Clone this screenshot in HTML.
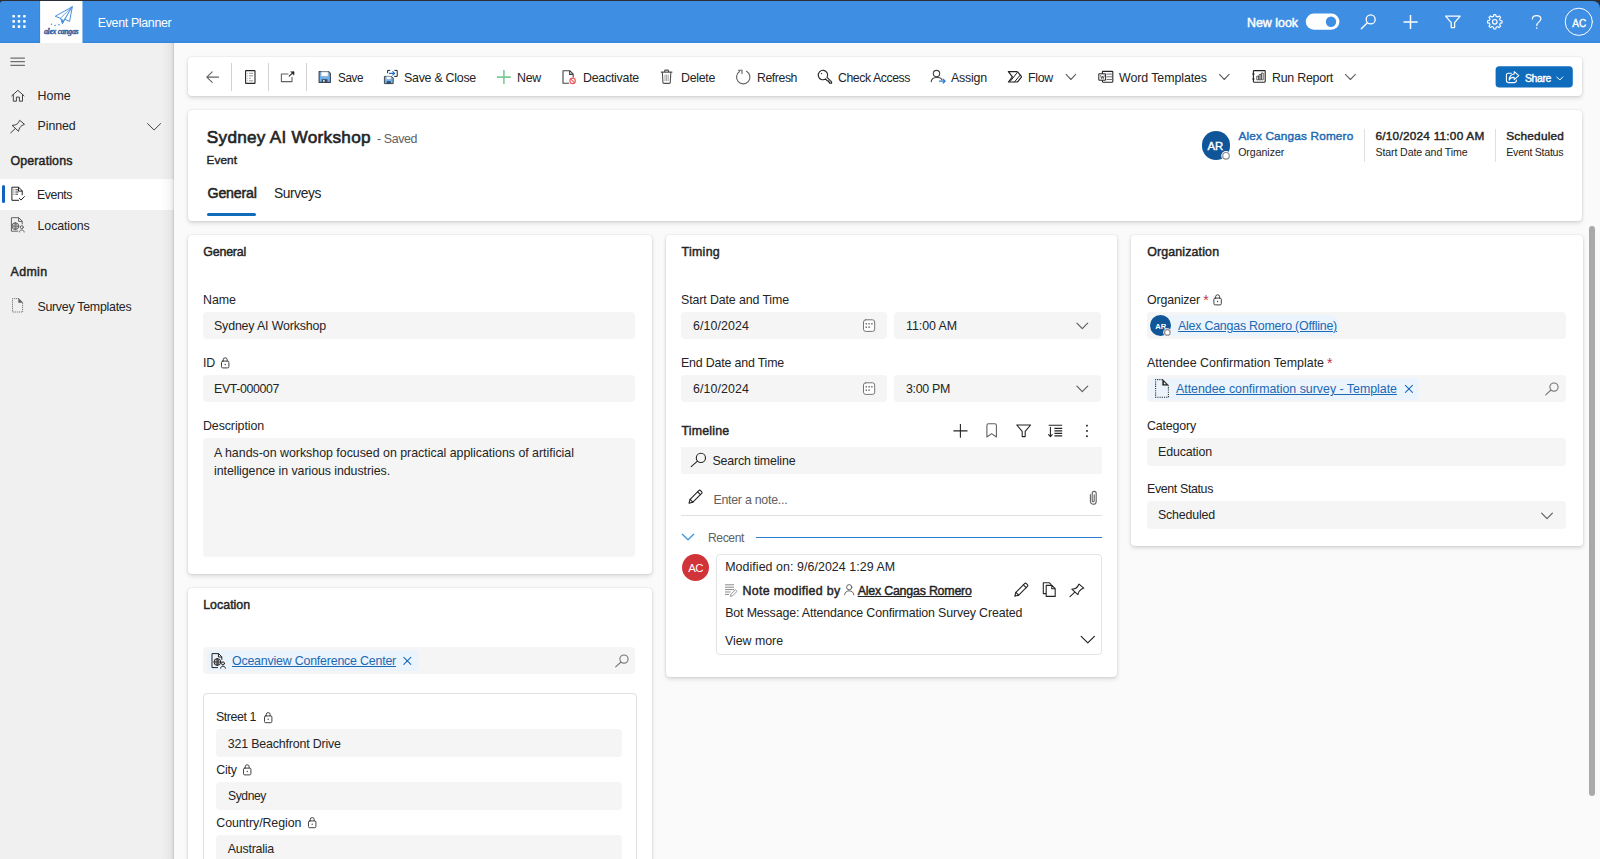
<!DOCTYPE html>
<html lang="en">
<head>
<meta charset="utf-8">
<title>Event: Sydney AI Workshop - Event Planner</title>
<style>
*{box-sizing:border-box;margin:0;padding:0}
html,body{width:1600px;height:859px;overflow:hidden;background:#fafafa;font-family:"Liberation Sans",sans-serif;color:#242424}
.abs,.t,.b,svg.i{position:absolute}
.t{white-space:nowrap;line-height:1;display:block}
.card{position:absolute;background:#fff;border-radius:4px;box-shadow:0 0 2px rgba(0,0,0,.12),0 2px 4px rgba(0,0,0,.14)}
.in{position:absolute;background:#f5f5f5;border-radius:4px}
.sep{position:absolute;width:1px;background:#d1d1d1}
svg.i{overflow:visible;fill:none;stroke:#424242;stroke-width:1;stroke-linecap:round;stroke-linejoin:round}
#top{left:0;top:1px;width:1600px;height:42px;background:#3e8ee3;border-radius:3px 7px 0 0}
#nav{left:0;top:43px;width:174px;height:816px;background:#f0f0f0}
#navsh{left:160px;top:43px;width:14px;height:816px;background:linear-gradient(90deg,rgba(0,0,0,0) 0%,rgba(0,0,0,.015) 40%,rgba(0,0,0,.045) 75%,rgba(0,0,0,.09) 92%,rgba(0,0,0,.2) 100%)}
</style>
</head>
<body>
<!-- top bar -->
<div class="abs" style="left:0;top:0;width:1600px;height:12px;background:#2a2f36"></div>
<div class="abs" id="top"></div>
<div class="abs" style="left:0;top:41px;width:1600px;height:2px;background:#3789e0"></div>
<div class="abs" style="left:174px;top:43px;width:1426px;height:1px;background:#fdfdfd"></div>
<svg class="abs" style="left:39px;top:0" width="46" height="44" viewBox="39 0 46 44"><rect x="39.4" y="1" width="43.8" height="42" fill="#3285de"/><rect x="40.1" y="1" width="42.4" height="42" fill="#fff"/></svg>
<!-- nav -->
<div class="abs" id="nav"></div>
<div class="abs" style="left:0;top:179px;width:174px;height:30.6px;background:#fff"></div>
<div class="abs" id="navsh"></div>
<div class="abs" style="left:1.7px;top:185px;width:3.2px;height:18px;border-radius:1.6px;background:#0f62c0"></div>
<!-- command bar -->
<div class="card" style="left:188px;top:57px;width:1394px;height:39px"></div>
<div class="sep" style="left:231px;top:63px;height:28px"></div>
<div class="sep" style="left:268px;top:63px;height:28px"></div>
<div class="sep" style="left:306px;top:63px;height:28px"></div>
<svg class="abs" style="left:1494px;top:65px" width="81" height="25" viewBox="1494 65 81 25"><rect x="1495.6" y="66.3" width="77.2" height="21.2" rx="3.8" fill="#0f6cbd"/></svg>
<!-- header card -->
<div class="card" style="left:188px;top:110px;width:1394px;height:111px"></div>
<div class="abs" style="left:207.2px;top:213px;width:48.8px;height:2.8px;border-radius:2px;background:#0f6cbd"></div>
<div class="abs" style="left:1201.6px;top:131.4px;width:28.2px;height:28.2px;border-radius:50%;background:#0f5598"></div>
<div class="sep" style="left:1364px;top:129px;height:33px;background:#e0e0e0"></div>
<div class="sep" style="left:1495px;top:129px;height:33px;background:#e0e0e0"></div>
<!-- General card -->
<div class="card" style="left:188px;top:235px;width:464px;height:338.5px"></div>
<div class="in" style="left:203px;top:311.6px;width:432px;height:27.4px"></div>
<div class="in" style="left:203px;top:375px;width:432px;height:27px"></div>
<div class="in" style="left:203px;top:438px;width:432px;height:119px"></div>
<!-- Location card -->
<div class="card" style="left:188px;top:587.5px;width:464px;height:300px"></div>
<div class="in" style="left:203px;top:647px;width:432px;height:27px"></div>
<div class="abs" style="left:206.6px;top:650.4px;width:211.7px;height:20.8px;border-radius:4px;background:#ebf3fc"></div>
<div class="abs" style="left:203px;top:693px;width:434px;height:200px;border:1px solid #e0e0e0;border-radius:4px;background:#fff"></div>
<div class="in" style="left:216px;top:729.4px;width:406px;height:27.6px"></div>
<div class="in" style="left:216px;top:782px;width:406px;height:27.6px"></div>
<div class="in" style="left:216px;top:834.8px;width:406px;height:27.6px"></div>
<!-- Timing card -->
<div class="card" style="left:666px;top:235px;width:451px;height:442px"></div>
<div class="in" style="left:681px;top:311.6px;width:206px;height:27.4px"></div>
<div class="in" style="left:894px;top:311.6px;width:207px;height:27.4px"></div>
<div class="in" style="left:681px;top:375px;width:206px;height:27px"></div>
<div class="in" style="left:894px;top:375px;width:207px;height:27px"></div>
<div class="abs" style="left:681px;top:447px;width:421px;height:27px;background:#f5f5f5"></div>
<div class="abs" style="left:681px;top:515px;width:421px;height:1px;background:#e0e0e0"></div>
<div class="abs" style="left:756.4px;top:537px;width:345.6px;height:1px;background:#2b7cd3"></div>
<div class="abs" style="left:682px;top:554px;width:27px;height:27px;border-radius:50%;background:#d13438"></div>
<div class="abs" style="left:716px;top:554px;width:386px;height:100.6px;border:1px solid #e4e4e4;border-radius:4px;background:#fff"></div>
<!-- Organization card -->
<div class="card" style="left:1131px;top:235px;width:451.5px;height:310.6px"></div>
<div class="in" style="left:1146.5px;top:311.8px;width:419.5px;height:27.2px"></div>
<div class="abs" style="left:1150px;top:314.8px;width:189.5px;height:21px;border-radius:10.5px;background:#ebf3fc"></div>
<div class="in" style="left:1146.5px;top:375px;width:419.5px;height:27.4px"></div>
<div class="abs" style="left:1150.3px;top:378.2px;width:269.1px;height:21.4px;border-radius:4px;background:#ebf3fc"></div>
<div class="in" style="left:1146.5px;top:438px;width:419.5px;height:27.6px"></div>
<div class="in" style="left:1146.5px;top:501.2px;width:419.5px;height:27.6px"></div>
<div class="abs" style="left:1150px;top:314.8px;width:21px;height:21px;border-radius:50%;background:#0f5598"></div>
<!-- scrollbar -->
<div class="abs" style="left:1589px;top:226px;width:6px;height:570.4px;border-radius:3px;background:#a9a9a9"></div>
<svg class="i" style="left:0;top:0" width="1600" height="859" viewBox="0 0 1600 859">
<!-- ===== top bar ===== -->
<g fill="#fff" stroke="none">
<rect x="12.4" y="14.9" width="2.6" height="2.6" rx=".7"/><rect x="17.7" y="14.9" width="2.6" height="2.6" rx=".7"/><rect x="23.1" y="14.9" width="2.6" height="2.6" rx=".7"/>
<rect x="12.4" y="20.1" width="2.6" height="2.6" rx=".7"/><rect x="17.7" y="20.1" width="2.6" height="2.6" rx=".7"/><rect x="23.1" y="20.1" width="2.6" height="2.6" rx=".7"/>
<rect x="12.4" y="25.3" width="2.6" height="2.6" rx=".7"/><rect x="17.7" y="25.3" width="2.6" height="2.6" rx=".7"/><rect x="23.1" y="25.3" width="2.6" height="2.6" rx=".7"/>
<rect x="1305.8" y="13.6" width="33.6" height="16.1" rx="8.05"/>
</g>
<circle cx="1331" cy="21.7" r="5.2" fill="#3e8ee3" stroke="none"/>
<g stroke="#fff" stroke-width="1.15">
<circle cx="1370.7" cy="19.4" r="4.5" stroke-width="1.3"/><path d="M1367.4 22.7 L1361.3 28.7" stroke-width="1.3"/>
<path d="M1403.5 21.9 H1417.7 M1410.5 15 V28.9" stroke-width="1.5" stroke-linecap="butt"/>
<path d="M1445.6 16.1 H1460.2 L1454.6 22.7 V27.6 H1451.2 V22.7 Z" stroke-width="1.25"/>
<circle cx="1494.8" cy="21.8" r="2.3"/>
<path d="M1500.25 20.49 L1502.03 20.77 L1502.03 22.83 L1500.25 23.11 L1499.57 24.73 L1500.64 26.18 L1499.18 27.64 L1497.73 26.57 L1496.11 27.25 L1495.83 29.03 L1493.77 29.03 L1493.49 27.25 L1491.87 26.57 L1490.42 27.64 L1488.96 26.18 L1490.03 24.73 L1489.35 23.11 L1487.57 22.83 L1487.57 20.77 L1489.35 20.49 L1490.03 18.87 L1488.96 17.42 L1490.42 15.96 L1491.87 17.03 L1493.49 16.35 L1493.77 14.57 L1495.83 14.57 L1496.11 16.35 L1497.73 17.03 L1499.18 15.96 L1500.64 17.42 L1499.57 18.87 Z" stroke-linejoin="round"/>
<path d="M1532.4 19 C1532.4 16.9 1534.2 15.6 1536.6 15.6 C1539.1 15.6 1540.9 17 1540.9 19 C1540.9 21.6 1536.8 22.3 1536.8 25.4" stroke-width="1.2"/>
<circle cx="1536.8" cy="28.1" r=".8" fill="#fff" stroke="none"/>
<circle cx="1578.8" cy="21.8" r="13.6" stroke-width="1"/>
</g>
<!-- logo -->
<g stroke="#4a90e2" stroke-width="1">
<path d="M72 6.9 L55.2 16.3 L60.5 18.2 L62.5 23.5 L64.6 19.2 L69.2 21.3 Z"/>
<path d="M72 6.9 L60.5 18.2 M72 6.9 L64.6 19.2 M72 6.9 L62.5 23.5" stroke-width=".8"/>
<path d="M61.2 19.4 L62.5 23.2 L63.6 20.6 Z" fill="#4a90e2" stroke-width=".6"/>
</g>
<g fill="#4a90e2" stroke="none"><circle cx="51.5" cy="24.3" r=".75"/><circle cx="55.1" cy="25.5" r=".8"/><circle cx="59" cy="24.7" r=".8"/></g>
<!-- ===== nav ===== -->
<g stroke="#424242" stroke-width="1">
<path d="M10.4 58.1 H24.9 M10.4 61.7 H24.9 M10.4 65.3 H24.9" stroke="#505050" stroke-linecap="butt"/>
<path d="M11.8 95.8 L17.9 90.3 L24 95.8 M13.3 94.6 V101.2 H16.4 V97.1 H19.4 V101.2 H22.5 V94.6"/>
<path transform="translate(0 0)" d="M12.5 125.4 C15 125.3 17.2 124.4 18.2 122.8 L19.7 120.3 L24.5 124.3 L22 125.5 C20.4 126.5 19 128.4 18.6 130.9 Z M15.5 128.4 L10.7 132.8" stroke="#424242" stroke-width="1.0" fill="none"/>
<path d="M147.6 123.6 L154.1 130 L160.6 123.6" stroke="#424242"/>
</g>
<!-- events icon -->
<g stroke="#242424" stroke-width="1">
<path d="M22.2 194.8 V190.9 L18.7 187.2 H11.9 V200.3 H18.6 M18.5 187.4 V191.1 H22"/>
<path d="M13.4 189.8 H14.3 M15.4 189.8 H18 M13.4 192 H14.3 M15.4 192 H18.6 M13.4 194.2 H14.3 M15.4 194.2 H18" stroke-width=".9" stroke-linecap="butt"/>
<path d="M19.4 198.4 L21 200.1 L24.4 196.6"/>
</g>
<!-- locations icon -->
<g stroke="#616161" stroke-width="1">
<path d="M22.2 224 V221.2 L18.8 217.7 H11.4 V231.2 H17.8 M18.6 217.9 V221.4 H22"/>
<circle cx="15.4" cy="226.2" r="3.4"/>
<path d="M12 226.2 H18.8 M15.4 222.8 V229.6 M15.4 222.8 C13.3 224.6 13.3 227.8 15.4 229.6 M15.4 222.8 C17.5 224.6 17.5 227.8 15.4 229.6" stroke-width=".8"/>
<circle cx="21.8" cy="227.2" r="1.5" fill="#f0f0f0"/>
<path d="M19.4 232 C19.4 229.2 24.2 229.2 24.2 232" fill="#f0f0f0"/>
</g>
<!-- survey templates icon -->
<g stroke="#616161" stroke-width="1">
<path d="M18.8 298.6 H12.5 V312 H22.6 V302.4" stroke-dasharray="1 1" stroke-linecap="butt"/>
<path d="M18.8 298.6 L22.6 302.4 H18.8 Z" fill="#616161" stroke-width=".6"/>
</g>
<!-- ===== command bar ===== -->
<g stroke="#616161" stroke-width="1.1">
<path d="M218.6 77.1 H206.8 M212.2 71.8 L206.8 77.1 L212.2 82.4"/>
</g>
<g stroke="#242424" stroke-width="1.1">
<rect x="245.6" y="70.6" width="9.4" height="12.8" rx=".5"/>
<path d="M247.4 73.3 H248 M249 73.3 H253 M247.4 75.8 H248 M249 75.8 H253 M247.4 78.3 H248 M249 78.3 H250.8 M247.4 80.8 H248 M249 80.8 H253" stroke="#8a8a8a" stroke-width=".9" stroke-linecap="butt"/>
</g>
<g stroke="#616161" stroke-width="1.1">
<path d="M288 74 H281.4 V81.6 H292 V77.2"/>
<path d="M289.2 76.2 L293.6 72.2" stroke="#242424"/>
<path d="M291 71.8 H294 V74.8 Z" fill="#242424" stroke="#242424" stroke-width=".6"/>
</g>
<!-- save -->
<g stroke="#3b4654" stroke-width="1.1">
<path d="M319.1 71.6 H328.6 L330.4 73.4 V82.4 H319.1 Z" fill="#6cb2f2"/>
<rect x="321.2" y="71.8" width="7" height="4.6" fill="#fff" stroke="#9aa7b5" stroke-width=".7"/>
<rect x="321.8" y="79.2" width="5.6" height="3.2" fill="#3b4654" stroke="none"/>
<rect x="323.2" y="80" width="1.4" height="1.8" fill="#fff" stroke="none"/>
</g>
<!-- save & close -->
<g stroke="#3b4654" stroke-width="1">
<path d="M384.8 76.4 H391.6 L393.2 78 V83.6 H384.8 Z" fill="#6cb2f2"/>
<rect x="386.4" y="76.6" width="4.6" height="2.8" fill="#fff" stroke="#9aa7b5" stroke-width=".6"/>
<rect x="386.8" y="81.2" width="4" height="2.4" fill="#3b4654" stroke="none"/>
<path d="M387.6 72.8 V70.4 H389.8 M394.8 70.4 H397.2 V76.4 H394.6" stroke="#242424"/>
<path d="M389.4 73.4 H394.6 M392.8 71.6 L394.6 73.4 L392.8 75.2" stroke="#1f6fc4" stroke-width="1.1"/>
</g>
<!-- new -->
<path d="M496.9 77.1 H510.8 M503.9 70.1 V83.9" stroke="#7acb97" stroke-width="1.6" stroke-linecap="butt"/>
<!-- deactivate -->
<g stroke="#424242" stroke-width="1.1">
<path d="M573.2 77 V74.2 L569.8 70.7 H563 V83.3 H568.6 M569.6 70.9 V74.4 H573"/>
<circle cx="572.6" cy="80.9" r="2.7" stroke="#f05a5e" fill="#fff" stroke-width="1.2"/>
<path d="M570.8 79.2 L574.4 82.6" stroke="#f05a5e" stroke-width="1.1"/>
</g>
<!-- delete -->
<g stroke="#505050" stroke-width="1.1">
<path d="M661.2 72.1 H672 M664.6 72.1 V71 Q664.6 70.1 665.5 70.1 H667.7 Q668.6 70.1 668.6 71 V72.1 M662.4 72.3 L662.9 82.5 Q662.95 83.4 663.9 83.4 H669.3 Q670.25 83.4 670.3 82.5 L670.8 72.3"/>
<path d="M665 74.6 V81 M666.6 74.6 V81 M668.2 74.6 V81" stroke-width=".8" stroke="#8a8a8a" stroke-linecap="butt"/>
</g>
<!-- refresh -->
<g stroke="#616161" stroke-width="1.1">
<path d="M746.5 71.3 A6.7 6.7 0 1 1 739.6 71.5"/>
<path d="M738.4 70.3 H742 V73.6"/>
</g>
<!-- check access (key) -->
<g stroke="#242424" stroke-width="1.1">
<path d="M825.6 78.9 A4.7 4.7 0 1 1 827 77.4 L831.6 81.8 V83.2 H829.6 V82 H828.4 V80.8 H827.2 Z"/>
<circle cx="821.5" cy="73.6" r=".7" fill="#242424" stroke="none"/>
</g>
<!-- assign -->
<g stroke="#424242" stroke-width="1.1">
<circle cx="936.5" cy="73.6" r="3.2"/>
<path d="M931.2 81.6 C931.6 76.6 941.2 76.4 942 80"/>
<path d="M939.4 81.1 H945 M943.2 79.2 L945.2 81.1 L943.2 83" stroke="#2b7cd3" stroke-width="1.2"/>
</g>
<!-- flow -->
<g stroke="#242424" stroke-width="1.2">
<path d="M1008.4 71.6 H1016.6 Q1017.4 71.6 1018 72.3 L1021.2 76.2 Q1021.6 76.8 1021.2 77.4 L1018 81.3 Q1017.4 82 1016.6 82 H1008.4 L1012.4 76.8 Z"/>
<path d="M1017.2 72.6 L1010 81.6 M1020 75.4 L1014.4 82" stroke-width="1"/>
</g>
<g stroke="#616161" stroke-width="1.1">
<path d="M1066.1 74.4 L1070.9 79.5 L1075.7 74.4"/>
<path d="M1219.5 74.4 L1224.3 79.5 L1229.1 74.4"/>
<path d="M1345.4 74.4 L1350.4 79.5 L1355.4 74.4"/>
</g>
<!-- word templates -->
<g stroke="#242424" stroke-width="1.1">
<rect x="1102.4" y="71.4" width="10.4" height="10.8" rx=".6"/>
<path d="M1106.6 74.1 H1112.6 M1106.6 76.8 H1112.6 M1106.6 79.5 H1112.6" stroke="#616161" stroke-width=".9" stroke-linecap="butt"/>
<rect x="1099.2" y="73.8" width="6.4" height="6.4" fill="#fff" stroke-width="1"/>
<path d="M1100.6 75.6 L1101.5 78.6 L1102.4 76.2 L1103.3 78.6 L1104.2 75.6" stroke-width=".7"/>
</g>
<!-- run report -->
<g stroke="#242424" stroke-width="1.1">
<rect x="1253.4" y="70.6" width="11.8" height="11.6" rx=".6"/>
<path d="M1252.6 74 H1254.2 M1252.6 79 H1254.2" stroke-width="1"/>
<rect x="1257.2" y="76.2" width="1.4" height="3.6" stroke="#333" stroke-width=".8"/>
<rect x="1259.5" y="74.6" width="1.4" height="5.2" stroke="#333" stroke-width=".8"/>
<rect x="1261.8" y="73" width="1.4" height="6.8" stroke="#333" stroke-width=".8"/>
</g>
<!-- share -->
<g stroke="#fff" stroke-width="1.05">
<path d="M1511.4 73.2 H1508.4 Q1506.4 73.2 1506.4 75.2 V80.6 Q1506.4 82.6 1508.4 82.6 H1514.4 Q1516.4 82.6 1516.4 80.6 V80"/>
<path d="M1514.2 71.6 L1518.8 75.6 L1514.2 79.6 V77.4 C1511.4 77.2 1509.8 78.4 1509.2 80.2 C1509.2 76.4 1511.2 74.2 1514.2 73.9 Z"/>
<path d="M1556.8 77 L1559.8 80 L1562.8 77" stroke-width="1"/>
</g>
<!-- ===== header avatar badge ===== -->
<circle cx="1226" cy="155.8" r="4.8" fill="#fff" stroke="none"/>
<circle cx="1226" cy="155.8" r="3.3" fill="#fff" stroke="#8a8a8a" stroke-width="1.2"/>
<!-- ===== locks ===== -->
<defs>
<g id="lock" stroke="#424242" stroke-width="1" fill="none">
<rect x=".5" y="3.9" width="7.4" height="6.8" rx="1.2"/>
<path d="M2.2 3.9 V2.6 A2 2 0 0 1 6.2 2.6 V3.9"/>
<circle cx="4.2" cy="7.3" r=".7" fill="#424242" stroke="none"/>
</g>
<g id="cal" fill="none">
<rect x=".5" y=".5" width="11.2" height="11.6" rx="2.2" fill="#fff" stroke="#757575" stroke-width="1"/>
<g fill="#616161" stroke="none"><rect x="2.6" y="3.8" width="1.4" height="1.4"/><rect x="5.4" y="3.8" width="1.4" height="1.4"/><rect x="8.2" y="3.8" width="1.4" height="1.4"/><rect x="2.6" y="7.2" width="1.4" height="1.4"/><rect x="5.4" y="7.2" width="1.4" height="1.4"/></g>
</g>
<path id="chev" d="M0 0 L5.4 5.5 L10.8 0" fill="none" stroke="#616161" stroke-width="1.2"/>
<g id="mag" fill="none" stroke="#757575" stroke-width="1.1"><circle cx="8.6" cy="4.6" r="4.1"/><path d="M5.6 7.5 L.3 12.4"/></g>
<path id="xx" d="M0 0 L7 7 M7 0 L0 7" fill="none" stroke="#1c6cbe" stroke-width="1.1"/>
</defs>
<use href="#lock" x="221" y="357.2"/>
<use href="#lock" x="264" y="712"/>
<use href="#lock" x="243" y="764.2"/>
<use href="#lock" x="308" y="817"/>
<use href="#lock" x="1213.4" y="294.2"/>
<!-- calendars -->
<use href="#cal" x="863" y="319.3"/>
<use href="#cal" x="863" y="382.3"/>
<!-- dropdown chevrons -->
<use href="#chev" x="1076.9" y="323.2"/>
<use href="#chev" x="1076.9" y="386.2"/>
<use href="#chev" x="1541.6" y="513.2"/>
<!-- lookup search icons -->
<use href="#mag" x="615.4" y="654.5"/>
<use href="#mag" x="1545.4" y="382.5"/>
<!-- chip x -->
<use href="#xx" x="403.8" y="657.3"/>
<use href="#xx" x="1405.4" y="385.4"/>
<!-- ===== location chip icon ===== -->
<g stroke="#242424" stroke-width="1">
<path d="M221.8 659.4 V656.8 L218.6 653.6 H212 V667.6 H217.6 M218.4 653.8 V657 H221.6"/>
<circle cx="217.4" cy="662" r="3.4"/>
<path d="M214 662 H220.8 M217.4 658.6 V665.4 M217.4 658.6 C215.4 660.4 215.4 663.6 217.4 665.4 M217.4 658.6 C219.4 660.4 219.4 663.6 217.4 665.4" stroke-width=".8"/>
<circle cx="223" cy="663.4" r="1.5" fill="#ebf3fc"/>
<path d="M220.6 668.2 C220.6 665.4 225.4 665.4 225.4 668.2" fill="#ebf3fc"/>
</g>
<!-- ===== template chip icon ===== -->
<g stroke="#242424" stroke-width="1.1">
<path d="M1162.6 379.6 H1155.6 V397.2 H1168.4 V385.4" stroke-dasharray="1.1 1.1" stroke-linecap="butt"/>
<path d="M1162.8 379.6 L1168.4 385.2 H1162.8 Z" fill="#242424" stroke-width=".6"/>
<path d="M1163.9 382 L1166.2 384.3 H1163.9 Z" fill="#fff" stroke="none"/>
</g>
<!-- ===== organizer small avatar badge ===== -->
<circle cx="1167.4" cy="332.4" r="4.2" fill="#fff" stroke="none"/>
<circle cx="1167.4" cy="332.4" r="2.8" fill="#fff" stroke="#8a8a8a" stroke-width="1.2"/>
<!-- ===== timeline toolbar ===== -->
<g stroke="#242424" stroke-width="1.1">
<path d="M953.4 430.9 H967.5 M960.4 424 V437.8" stroke-linecap="butt"/>
<path d="M1016.8 425 H1030.6 L1025.2 431.4 V436.6 H1022.2 V431.4 Z"/>
<path d="M1048.6 425.2 H1062.2 M1054.4 428.4 H1062.2 M1054.4 430.9 H1062.2 M1054.4 433.4 H1062.2 M1054.4 435.9 H1062.2" stroke-linecap="butt"/>
<path d="M1050.4 427.2 V436.4 M1048.6 434.6 L1050.4 436.6 L1052.2 434.6"/>
<g fill="#242424" stroke="none"><rect x="1086.1" y="424.8" width="1.7" height="1.7"/><rect x="1086.1" y="430.1" width="1.7" height="1.7"/><rect x="1086.1" y="435.4" width="1.7" height="1.7"/></g>
</g>
<path d="M986.9 437 V425.4 Q986.9 423.8 988.5 423.8 H994.8 Q996.4 423.8 996.4 425.4 V437 L991.65 433.6 Z" stroke="#616161" stroke-width="1.1"/>
<!-- search timeline icon -->
<g stroke="#242424" stroke-width="1.1"><circle cx="700.9" cy="457.9" r="4.6"/><path d="M697.5 461.2 L691.2 466.6"/></g>
<!-- pencil (note) -->
<defs><g id="pen" fill="none" stroke-width="1.1">
<path d="M.6 13.8 L1.7 9.9 L10.4 1.2 Q11.3 .3 12.2 1.2 L13.2 2.2 Q14.1 3.1 13.2 4 L4.5 12.7 Z"/>
<path d="M1.7 9.9 L4.5 12.7 M9.2 2.4 L12 5.2"/>
</g></defs>
<use href="#pen" x="688.4" y="489.4" stroke="#242424"/>
<use href="#pen" x="1014.2" y="582.4" stroke="#242424"/>
<!-- paperclip -->
<path d="M1090.4 494.6 V501.4 A2.9 2.9 0 0 0 1096.2 501.4 V493.4 A2 2 0 0 0 1092.2 493.4 V500.8 A1 1 0 0 0 1094.2 500.8 V494.8" stroke="#616161" stroke-width="1.1"/>
<!-- recent chevron -->
<path d="M682.3 534.2 L688 539.8 L693.7 534.2" stroke="#3a96dd" stroke-width="1.2"/>
<!-- note icon -->
<g stroke="#8a8a8a" stroke-width="1" stroke-linecap="butt">
<path d="M725 584.8 H734 M725 587.2 H734 M725 589.6 H734 M725 592 H730.6 M725 594.4 H729"/>
<path d="M730.4 596.4 L731 594.2 L735.4 589.8 L737 591.4 L732.6 595.8 Z" fill="#fff" stroke="#8a8a8a" stroke-width=".9"/>
</g>
<!-- person icon -->
<g stroke="#616161" stroke-width="1"><circle cx="849.2" cy="587.2" r="2.6"/><path d="M844.6 594.8 C844.6 589.4 853.8 589.4 853.8 594.8"/></g>
<!-- copy -->
<g stroke="#242424" stroke-width="1.1">
<path d="M1045.6 593.6 H1043.3 V582.8 H1049.4 L1051 584.4"/>
<path d="M1046.2 585.4 H1052 L1055.2 588.6 V596.4 H1046.2 Z M1051.8 585.6 V588.8 H1055"/>
</g>
<path transform="translate(1059.3 463.8)" d="M12.5 125.4 C15 125.3 17.2 124.4 18.2 122.8 L19.7 120.3 L24.5 124.3 L22 125.5 C20.4 126.5 19 128.4 18.6 130.9 Z M15.5 128.4 L10.7 132.8" stroke="#242424" stroke-width="1.1" fill="none"/>
<!-- view more chevron -->
<path d="M1081.2 636.4 L1087.8 642.9 L1094.4 636.4" stroke="#242424" stroke-width="1.2"/>
</svg>

<span class="t" id="t0" style="left:97.8px;top:17.00px;font-size:12.4px;font-weight:400;color:#ffffff;letter-spacing:-0.334px;">Event Planner</span>
<span class="t" id="t1" style="left:1247px;top:17.00px;font-size:12.4px;font-weight:400;-webkit-text-stroke:0.45px #ffffff;color:#ffffff;letter-spacing:0.004px;">New look</span>
<span class="t" id="t2" style="left:1572.3px;top:19.00px;font-size:10px;font-weight:400;-webkit-text-stroke:0.36px #ffffff;color:#ffffff;letter-spacing:0.147px;">AC</span>
<span class="t" id="t3" style="left:37.6px;top:90.00px;font-size:12.4px;font-weight:400;color:#242424;letter-spacing:-0.016px;">Home</span>
<span class="t" id="t4" style="left:37.6px;top:120.00px;font-size:12.4px;font-weight:400;color:#242424;letter-spacing:-0.099px;">Pinned</span>
<span class="t" id="t5" style="left:10.5px;top:155.00px;font-size:12.4px;font-weight:400;-webkit-text-stroke:0.45px #242424;color:#242424;letter-spacing:0.138px;">Operations</span>
<span class="t" id="t6" style="left:37px;top:189.00px;font-size:12.4px;font-weight:400;color:#242424;letter-spacing:-0.420px;transform:scaleX(0.9895);transform-origin:0 0;">Events</span>
<span class="t" id="t7" style="left:37.6px;top:220.00px;font-size:12.4px;font-weight:400;color:#242424;letter-spacing:-0.116px;">Locations</span>
<span class="t" id="t8" style="left:10.5px;top:266.00px;font-size:12.4px;font-weight:400;-webkit-text-stroke:0.45px #242424;color:#242424;letter-spacing:0.375px;">Admin</span>
<span class="t" id="t9" style="left:37.4px;top:301.00px;font-size:12.4px;font-weight:400;color:#242424;letter-spacing:-0.267px;">Survey Templates</span>
<span class="t" id="t10" style="left:338px;top:72.00px;font-size:12.4px;font-weight:400;color:#242424;letter-spacing:-0.420px;transform:scaleX(0.9409);transform-origin:0 0;">Save</span>
<span class="t" id="t11" style="left:404px;top:72.00px;font-size:12.4px;font-weight:400;color:#242424;letter-spacing:-0.257px;">Save &amp; Close</span>
<span class="t" id="t12" style="left:517px;top:72.00px;font-size:12.4px;font-weight:400;color:#242424;letter-spacing:-0.266px;">New</span>
<span class="t" id="t13" style="left:583px;top:72.00px;font-size:12.4px;font-weight:400;color:#242424;letter-spacing:-0.255px;">Deactivate</span>
<span class="t" id="t14" style="left:681px;top:72.00px;font-size:12.4px;font-weight:400;color:#242424;letter-spacing:-0.305px;">Delete</span>
<span class="t" id="t15" style="left:757px;top:72.00px;font-size:12.4px;font-weight:400;color:#242424;letter-spacing:-0.420px;transform:scaleX(0.9889);transform-origin:0 0;">Refresh</span>
<span class="t" id="t16" style="left:838px;top:72.00px;font-size:12.4px;font-weight:400;color:#242424;letter-spacing:-0.420px;transform:scaleX(0.9892);transform-origin:0 0;">Check Access</span>
<span class="t" id="t17" style="left:951px;top:72.00px;font-size:12.4px;font-weight:400;color:#242424;letter-spacing:-0.201px;">Assign</span>
<span class="t" id="t18" style="left:1028px;top:72.00px;font-size:12.4px;font-weight:400;color:#242424;letter-spacing:-0.293px;">Flow</span>
<span class="t" id="t19" style="left:1119px;top:72.00px;font-size:12.4px;font-weight:400;color:#242424;letter-spacing:-0.077px;">Word Templates</span>
<span class="t" id="t20" style="left:1272px;top:72.00px;font-size:12.4px;font-weight:400;color:#242424;letter-spacing:-0.237px;">Run Report</span>
<span class="t" id="t21" style="left:1525px;top:73.00px;font-size:11.4px;font-weight:400;-webkit-text-stroke:0.41px #ffffff;color:#ffffff;letter-spacing:-0.420px;transform:scaleX(0.9185);transform-origin:0 0;">Share</span>
<span class="t" id="t22" style="left:206.8px;top:129.00px;font-size:17.2px;font-weight:400;-webkit-text-stroke:0.62px #242424;color:#242424;letter-spacing:0.265px;">Sydney AI Workshop</span>
<span class="t" id="t23" style="left:377px;top:133.00px;font-size:12.4px;font-weight:400;color:#616161;letter-spacing:-0.386px;">- Saved</span>
<span class="t" id="t24" style="left:206.6px;top:155.00px;font-size:11.8px;font-weight:400;-webkit-text-stroke:0.42px #242424;color:#242424;letter-spacing:0.046px;">Event</span>
<span class="t" id="t25" style="left:207.6px;top:186.00px;font-size:14.2px;font-weight:400;-webkit-text-stroke:0.51px #242424;color:#242424;letter-spacing:-0.212px;">General</span>
<span class="t" id="t26" style="left:274px;top:186.00px;font-size:14.2px;font-weight:400;color:#242424;letter-spacing:-0.420px;transform:scaleX(0.9729);transform-origin:0 0;">Surveys</span>
<span class="t" id="t27" style="left:1207.6px;top:141.00px;font-size:11.4px;font-weight:400;-webkit-text-stroke:0.41px #ffffff;color:#ffffff;letter-spacing:-0.114px;">AR</span>
<span class="t" id="t28" style="left:1238.4px;top:131.00px;font-size:11.8px;font-weight:400;-webkit-text-stroke:0.42px #1c69b4;color:#1c69b4;letter-spacing:0.160px;">Alex Cangas Romero</span>
<span class="t" id="t29" style="left:1238.2px;top:147.00px;font-size:10.6px;font-weight:400;color:#242424;letter-spacing:-0.057px;">Organizer</span>
<span class="t" id="t30" style="left:1375.5px;top:131.00px;font-size:11.8px;font-weight:400;-webkit-text-stroke:0.42px #242424;color:#242424;letter-spacing:0.237px;">6/10/2024 11:00 AM</span>
<span class="t" id="t31" style="left:1375.5px;top:147.00px;font-size:10.6px;font-weight:400;color:#242424;letter-spacing:-0.117px;">Start Date and Time</span>
<span class="t" id="t32" style="left:1506.2px;top:131.00px;font-size:11.8px;font-weight:400;-webkit-text-stroke:0.42px #242424;color:#242424;letter-spacing:0.248px;">Scheduled</span>
<span class="t" id="t33" style="left:1506.3px;top:147.00px;font-size:10.6px;font-weight:400;color:#242424;letter-spacing:-0.257px;">Event Status</span>
<span class="t" id="t34" style="left:203.2px;top:246.00px;font-size:12.4px;font-weight:400;-webkit-text-stroke:0.45px #242424;color:#242424;letter-spacing:-0.156px;">General</span>
<span class="t" id="t35" style="left:203px;top:294.00px;font-size:12.4px;font-weight:400;color:#242424;letter-spacing:-0.016px;">Name</span>
<span class="t" id="t36" style="left:214px;top:320.00px;font-size:12.4px;font-weight:400;color:#242424;letter-spacing:-0.155px;">Sydney AI Workshop</span>
<span class="t" id="t37" style="left:203px;top:357.00px;font-size:12.4px;font-weight:400;color:#242424;letter-spacing:-0.203px;">ID</span>
<span class="t" id="t38" style="left:214px;top:383.00px;font-size:12.4px;font-weight:400;color:#242424;letter-spacing:-0.389px;">EVT-000007</span>
<span class="t" id="t39" style="left:203px;top:420.00px;font-size:12.4px;font-weight:400;color:#242424;letter-spacing:-0.089px;">Description</span>
<span class="t" id="t40" style="left:214px;top:447.00px;font-size:12.4px;font-weight:400;color:#242424;letter-spacing:-0.014px;">A hands-on workshop focused on practical applications of artificial</span>
<span class="t" id="t41" style="left:214px;top:465.00px;font-size:12.4px;font-weight:400;color:#242424;letter-spacing:-0.068px;">intelligence in various industries.</span>
<span class="t" id="t42" style="left:203.2px;top:599.00px;font-size:12.4px;font-weight:400;-webkit-text-stroke:0.45px #242424;color:#242424;letter-spacing:0.018px;">Location</span>
<span class="t" id="t43" style="left:232px;top:655.00px;font-size:12.4px;font-weight:400;color:#1c69b4;letter-spacing:-0.201px;text-decoration:underline;">Oceanview Conference Center</span>
<span class="t" id="t44" style="left:216.3px;top:711.00px;font-size:12.4px;font-weight:400;color:#242424;letter-spacing:-0.420px;transform:scaleX(0.9988);transform-origin:0 0;">Street 1</span>
<span class="t" id="t45" style="left:227.8px;top:738.00px;font-size:12.4px;font-weight:400;color:#242424;letter-spacing:-0.170px;">321 Beachfront Drive</span>
<span class="t" id="t46" style="left:216.3px;top:764.00px;font-size:12.4px;font-weight:400;color:#242424;letter-spacing:-0.236px;">City</span>
<span class="t" id="t47" style="left:227.8px;top:790.00px;font-size:12.4px;font-weight:400;color:#242424;letter-spacing:-0.420px;transform:scaleX(0.9788);transform-origin:0 0;">Sydney</span>
<span class="t" id="t48" style="left:216.3px;top:817.00px;font-size:12.4px;font-weight:400;color:#242424;letter-spacing:-0.078px;">Country/Region</span>
<span class="t" id="t49" style="left:227.8px;top:843.00px;font-size:12.4px;font-weight:400;color:#242424;letter-spacing:-0.224px;">Australia</span>
<span class="t" id="t50" style="left:681.6px;top:246.00px;font-size:12.4px;font-weight:400;-webkit-text-stroke:0.45px #242424;color:#242424;letter-spacing:0.280px;">Timing</span>
<span class="t" id="t51" style="left:681px;top:294.00px;font-size:12.4px;font-weight:400;color:#242424;letter-spacing:-0.116px;">Start Date and Time</span>
<span class="t" id="t52" style="left:693px;top:320.00px;font-size:12.4px;font-weight:400;color:#242424;letter-spacing:0.097px;">6/10/2024</span>
<span class="t" id="t53" style="left:906px;top:320.00px;font-size:12.4px;font-weight:400;color:#242424;letter-spacing:-0.055px;">11:00 AM</span>
<span class="t" id="t54" style="left:681px;top:357.00px;font-size:12.4px;font-weight:400;color:#242424;letter-spacing:-0.181px;">End Date and Time</span>
<span class="t" id="t55" style="left:693px;top:383.00px;font-size:12.4px;font-weight:400;color:#242424;letter-spacing:0.097px;">6/10/2024</span>
<span class="t" id="t56" style="left:906px;top:383.00px;font-size:12.4px;font-weight:400;color:#242424;letter-spacing:-0.308px;">3:00 PM</span>
<span class="t" id="t57" style="left:681.4px;top:425.00px;font-size:12.4px;font-weight:400;-webkit-text-stroke:0.45px #242424;color:#242424;letter-spacing:0.203px;">Timeline</span>
<span class="t" id="t58" style="left:712.4px;top:455.00px;font-size:12.4px;font-weight:400;color:#242424;letter-spacing:-0.160px;">Search timeline</span>
<span class="t" id="t59" style="left:713.4px;top:494.00px;font-size:12.4px;font-weight:400;color:#616161;letter-spacing:-0.256px;">Enter a note...</span>
<span class="t" id="t60" style="left:707.5px;top:532.00px;font-size:12.4px;font-weight:400;color:#616161;letter-spacing:-0.420px;transform:scaleX(0.9797);transform-origin:0 0;">Recent</span>
<span class="t" id="t61" style="left:688.2px;top:563.00px;font-size:11.4px;font-weight:400;color:#ffffff;letter-spacing:-0.414px;">AC</span>
<span class="t" id="t62" style="left:725.2px;top:561.00px;font-size:12.4px;font-weight:400;color:#242424;letter-spacing:0.066px;">Modified on: 9/6/2024 1:29 AM</span>
<span class="t" id="t63" style="left:742.5px;top:585.00px;font-size:12.4px;font-weight:400;-webkit-text-stroke:0.45px #242424;color:#242424;letter-spacing:0.313px;">Note modified by</span>
<span class="t" id="t64" style="left:857.7px;top:585.00px;font-size:12.4px;font-weight:400;-webkit-text-stroke:0.45px #242424;color:#242424;letter-spacing:-0.209px;text-decoration:underline;">Alex Cangas Romero</span>
<span class="t" id="t65" style="left:725.2px;top:607.00px;font-size:12.4px;font-weight:400;color:#242424;letter-spacing:-0.146px;">Bot Message: Attendance Confirmation Survey Created</span>
<span class="t" id="t66" style="left:725px;top:635.00px;font-size:12.4px;font-weight:400;color:#242424;letter-spacing:-0.035px;">View more</span>
<span class="t" id="t67" style="left:1147.2px;top:246.00px;font-size:12.4px;font-weight:400;-webkit-text-stroke:0.45px #242424;color:#242424;letter-spacing:0.145px;">Organization</span>
<span class="t" id="t68" style="left:1147px;top:294.00px;font-size:12.4px;font-weight:400;color:#242424;letter-spacing:-0.156px;">Organizer</span>
<span class="t" id="t69" style="left:1203.2px;top:293.00px;font-size:14px;font-weight:400;color:#c4314b;">*</span>
<span class="t" id="t70" style="left:1178px;top:320.00px;font-size:12.4px;font-weight:400;color:#1c69b4;letter-spacing:-0.217px;text-decoration:underline;">Alex Cangas Romero (Offline)</span>
<span class="t" id="t71" style="left:1147px;top:357.00px;font-size:12.4px;font-weight:400;color:#242424;letter-spacing:0.007px;">Attendee Confirmation Template</span>
<span class="t" id="t72" style="left:1327px;top:356.00px;font-size:14px;font-weight:400;color:#c4314b;">*</span>
<span class="t" id="t73" style="left:1176px;top:383.00px;font-size:12.4px;font-weight:400;color:#1c69b4;letter-spacing:-0.014px;text-decoration:underline;">Attendee confirmation survey - Template</span>
<span class="t" id="t74" style="left:1147px;top:420.00px;font-size:12.4px;font-weight:400;color:#242424;letter-spacing:-0.160px;">Category</span>
<span class="t" id="t75" style="left:1158px;top:446.00px;font-size:12.4px;font-weight:400;color:#242424;letter-spacing:-0.125px;">Education</span>
<span class="t" id="t76" style="left:1147px;top:483.00px;font-size:12.4px;font-weight:400;color:#242424;letter-spacing:-0.355px;">Event Status</span>
<span class="t" id="t77" style="left:1158px;top:509.00px;font-size:12.4px;font-weight:400;color:#242424;letter-spacing:-0.174px;">Scheduled</span>
<span class="t" id="t78" style="left:44.1px;top:27.00px;font-size:8.6px;font-weight:700;color:#2c5a9b;letter-spacing:-0.420px;transform:scaleX(0.9203);transform-origin:0 0;font-family:'Liberation Serif',serif;font-style:italic;-webkit-text-stroke:.3px #2c5a9b;">alex cangas</span>
<span class="t" id="t79" style="left:1155.2px;top:323.00px;font-size:7.6px;font-weight:700;color:#ffffff;letter-spacing:0.016px;">AR</span>
</body>
</html>
